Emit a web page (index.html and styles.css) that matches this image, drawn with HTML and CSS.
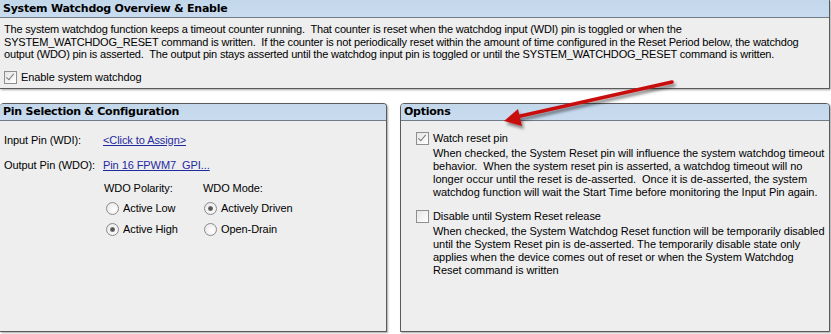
FILE: index.html
```html
<!DOCTYPE html>
<html>
<head>
<meta charset="utf-8">
<link rel="stylesheet" href="styles.css">
</head>
<body>
<div class="page">
  <section class="panel top">
    <div class="hdr">System Watchdog Overview &amp; Enable</div>
    <div class="body">
      <p class="desc">The system watchdog function keeps a timeout counter running.&nbsp; That counter is reset when the watchdog input (WDI) pin is toggled or when the<br>SYSTEM_WATCHDOG_RESET command is written.&nbsp; If the counter is not periodically reset within the amount of time configured in the Reset Period below, the watchdog<br>output (WDO) pin is asserted.&nbsp; The output pin stays asserted until the watchdog input pin is toggled or until the SYSTEM_WATCHDOG_RESET command is written.</p>
      <label class="chk-row"><span class="cb checked"></span>Enable system watchdog</label>
    </div>
  </section>
  <div class="row">
    <section class="panel pins">
      <div class="hdr">Pin Selection &amp; Configuration</div>
      <div class="body">
        <div class="pin-row"><span class="lbl">Input Pin (WDI):</span><a class="link">&lt;Click to Assign&gt;</a></div>
        <div class="pin-row second"><span class="lbl">Output Pin (WDO):</span><a class="link">Pin 16 FPWM7_GPI...</a></div>
        <div class="opts">
          <div class="col">
            <div class="col-title">WDO Polarity:</div>
            <div class="radio-row"><span class="rb"></span>Active Low</div>
            <div class="radio-row"><span class="rb on"></span>Active High</div>
          </div>
          <div class="col">
            <div class="col-title">WDO Mode:</div>
            <div class="radio-row"><span class="rb on"></span>Actively Driven</div>
            <div class="radio-row"><span class="rb"></span>Open-Drain</div>
          </div>
        </div>
      </div>
    </section>
    <section class="panel options">
      <div class="hdr">Options</div>
      <div class="body">
        <div class="opt">
          <div class="chk-row"><span class="cb checked"></span>Watch reset pin</div>
          <p class="opt-desc">When checked, the System Reset pin will influence the system watchdog timeout<br>behavior.&nbsp; When the system reset pin is asserted, a watchdog timeout will no<br>longer occur until the reset is de-asserted.&nbsp; Once it is de-asserted, the system<br>watchdog function will wait the Start Time before monitoring the Input Pin again.</p>
        </div>
        <div class="opt second">
          <div class="chk-row"><span class="cb"></span>Disable until System Reset release</div>
          <p class="opt-desc">When checked, the System Watchdog Reset function will be temporarily disabled<br>until the System Reset pin is de-asserted. The temporarily disable state only<br>applies when the device comes out of reset or when the System Watchdog<br>Reset command is written</p>
        </div>
      </div>
    </section>
  </div>
  <svg class="arrow" width="831" height="334" viewBox="0 0 831 334">
    <defs>
      <filter id="sh" x="-20%" y="-50%" width="140%" height="200%">
        <feDropShadow dx="2" dy="3" stdDeviation="1.6" flood-color="#000" flood-opacity="0.45"/>
      </filter>
    </defs>
    <g filter="url(#sh)">
      <line x1="672" y1="82" x2="516" y2="117" stroke="#c80c0c" stroke-width="3.6" stroke-linecap="round"/>
      <polygon points="504,121 518,109 522,126" fill="#c80c0c"/>
    </g>
  </svg>
</div>
</body>
</html>
```
FILE: styles.css
```css
html, body {
  margin: 0;
  padding: 0;
  background: #ffffff;
}
body {
  font-family: "Liberation Sans", Arial, sans-serif;
  font-size: 11px;
  letter-spacing: -0.08px;
  color: #000;
  width: 831px;
  height: 334px;
  overflow: hidden;
}
.page {
  position: relative;
  width: 831px;
  height: 334px;
}
.panel {
  background: #eeeeee;
  border: 1px solid #5a5a5a;
  border-left: none;
  border-radius: 4px 4px 0 0;
  box-shadow: 1px 1px 2px rgba(0, 0, 0, 0.35);
  box-sizing: border-box;
  overflow: hidden;
}
.hdr {
  height: 16px;
  line-height: 16px;
  background: linear-gradient(#c3d7eb, #c9dcef);
  border-bottom: 1px solid #6f7c88;
  font-weight: bold;
  font-family: "DejaVu Sans", Verdana, sans-serif;
  font-size: 11px;
  padding-left: 3px;
  letter-spacing: -0.25px;
}
.top {
  width: 830px;
  height: 89px;
  border-top: none;
  border-radius: 0;
}
.top .hdr {
  height: 17px;
  line-height: 17px;
}
.top .body {
  padding: 5px 0 0 4px;
}
.desc {
  margin: 0;
  line-height: 12.7px;
  white-space: nowrap;
  letter-spacing: -0.18px;
}
.chk-row {
  display: flex;
  align-items: center;
  gap: 4px;
  height: 14px;
}
.top .chk-row {
  margin-top: 9px;
}
.cb {
  width: 11px;
  height: 11px;
  border: 1px solid #8e8f8f;
  background: linear-gradient(135deg, #e6e6e6, #ffffff);
  position: relative;
  flex: none;
}
.cb.checked::after {
  content: "";
  position: absolute;
  left: 3px;
  top: 0px;
  width: 3px;
  height: 7px;
  border-right: 1.3px solid #7a7a7a;
  border-bottom: 1.3px solid #7a7a7a;
  transform: rotate(40deg);
}
.row {
  display: flex;
  gap: 13px;
  margin-top: 14px;
}
.pins {
  width: 387px;
  height: 229px;
}
.options {
  width: 430px;
  height: 229px;
  border-left: 1px solid #5a5a5a;
}
.pins .body {
  padding: 12px 0 0 4px;
}
.pin-row {
  display: flex;
  align-items: center;
  height: 14px;
}
.pin-row.second {
  margin-top: 11px;
}
.lbl {
  width: 99px;
}
.link {
  color: #1f2a9e;
  text-decoration: underline;
}
.opts {
  display: flex;
  margin-left: 99px;
  margin-top: 9px;
}
.col {
  width: 99px;
}
.col-title {
  height: 14px;
  line-height: 14px;
  padding-left: 1px;
}
.radio-row {
  display: flex;
  align-items: center;
  gap: 4px;
  height: 14px;
  margin-top: 7px;
  padding-left: 3px;
}
.col + .col .radio-row {
  padding-left: 2px;
}
.col-title + .radio-row {
  margin-top: 6px;
}
.rb {
  width: 11px;
  height: 11px;
  border: 1px solid #8a8a8a;
  border-radius: 50%;
  background: radial-gradient(circle at 60% 60%, #ffffff, #e4e4e4);
  position: relative;
  flex: none;
}
.rb.on::after {
  content: "";
  position: absolute;
  left: 3px;
  top: 3px;
  width: 5px;
  height: 5px;
  border-radius: 50%;
  background: radial-gradient(circle, #555 30%, #999 100%);
}
.options .body {
  padding: 10px 0 0 15px;
}
.opt-desc {
  margin: 2px 0 0 17px;
  line-height: 13px;
  white-space: nowrap;
  letter-spacing: -0.04px;
}
.opt.second {
  margin-top: 10px;
}
.arrow {
  position: absolute;
  left: 0;
  top: 0;
  pointer-events: none;
}
```
